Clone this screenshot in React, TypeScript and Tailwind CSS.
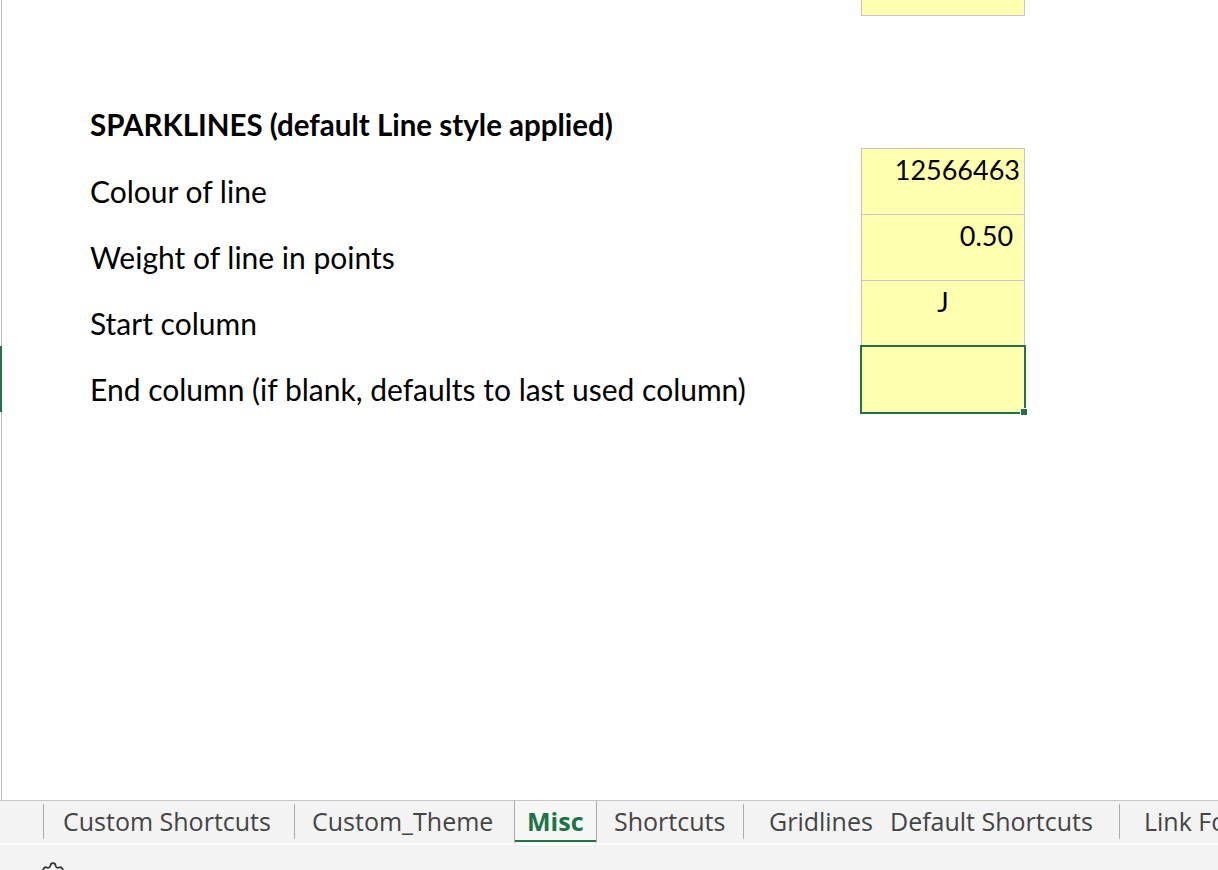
import { Settings } from 'lucide-react';

type SheetRow = {
  label?: string;
  bold?: boolean;
  value?: string;
  align?: 'right' | 'center';
  cell: boolean;
  selected?: boolean;
};

const rows: SheetRow[] = [
  { cell: false },
  { label: 'SPARKLINES (default Line style applied)', bold: true, cell: false },
  { label: 'Colour of line', value: '12566463', align: 'right', cell: true },
  { label: 'Weight of line in points', value: '0.50 ', align: 'right', cell: true },
  { label: 'Start column', value: 'J', align: 'center', cell: true },
  { label: 'End column (if blank, defaults to last used column)', cell: true, selected: true },
];

const tabs = [
  { name: 'Custom Shortcuts', w: 'w-[251px]', pl: 'pl-[20px]', sep: true },
  { name: 'Custom_Theme', w: 'w-[220px]', pl: 'pl-[18px]', sep: true },
  { name: 'Misc', w: 'w-[83px]', pl: 'pl-[12px]', active: true, sep: false },
  { name: 'Shortcuts', w: 'w-[146px]', pl: 'pl-[17px]', sep: false },
  { name: 'Gridlines', w: 'w-[140px]', pl: 'pl-[26px]', sep: true },
  { name: 'Default Shortcuts', w: 'w-[236px]', pl: 'pl-[7px]', sep: false },
  { name: 'Link Formats', w: 'w-[200px]', pl: 'pl-[25px]', sep: true },
];

function LeftEdge({ selected }: { selected?: boolean }) {
  return selected ? (
    <div className="w-[2px] shrink-0 bg-[#217346]" />
  ) : (
    <div className="w-[2px] shrink-0 flex">
      <div className="w-px bg-white" />
      <div className="w-px bg-[#bfbfbf]" />
    </div>
  );
}

function Row({ row }: { row: SheetRow }) {
  return (
    <div className="flex h-[66px]">
      <LeftEdge selected={row.selected} />
      <div className="w-[859px] shrink-0 flex items-end pl-[88px] pb-[6px]">
        <span
          className={`whitespace-nowrap leading-[34px] text-black ${
            row.bold ? 'font-bold text-[29.5px]' : 'text-[30px]'
          }`}
        >
          {row.label}
        </span>
      </div>
      {row.cell && (
        <div
          className={`relative w-[164px] shrink-0 bg-[#ffffb0] border-l border-r border-t border-[#c6c6c6] flex pt-[4px] px-[4px] ${
            row.align === 'center' ? 'justify-center' : 'justify-end'
          }`}
        >
          <span className="whitespace-pre text-[27px] leading-[34px] text-black">{row.value}</span>
          {row.selected && (
            <div className="absolute -left-[2px] -top-[2px] -right-[2px] -bottom-[2px] border-2 border-[#217346]">
              <div className="absolute -right-[4px] -bottom-[4px] w-[8px] h-[8px] bg-[#217346] border border-white" />
            </div>
          )}
        </div>
      )}
    </div>
  );
}

export default function App() {
  return (
    <div
      className="w-[1218px] h-[870px] overflow-hidden bg-white flex flex-col"
      style={{ fontFamily: 'Lato, "Noto Sans", sans-serif' }}
    >
      <div className="flex-1 flex flex-col">
        <div className="flex h-[16px]">
          <LeftEdge />
          <div className="w-[859px] shrink-0" />
          <div className="w-[164px] shrink-0 bg-[#ffffb0] border-l border-r border-b border-[#c6c6c6]" />
        </div>
        {rows.map((row, i) => (
          <Row key={i} row={row} />
        ))}
        <div className="flex flex-1">
          <LeftEdge />
        </div>
      </div>

      <div
        className="h-[43px] shrink-0 bg-[#f3f3f3] border-t border-[#c6c6c6] flex items-stretch overflow-hidden"
        style={{ fontFamily: '"Open Sans", "Noto Sans", sans-serif' }}
      >
        <div className="w-[43px] shrink-0" />
        {tabs.map((t) => (
          <div
            key={t.name}
            className={`${t.w} shrink-0 relative flex items-center ${t.pl} whitespace-nowrap ${
              t.active
                ? '-mt-px bg-[#f6f6f6] border-l border-r border-t border-[#ababab] text-[#217346] font-bold'
                : 'text-[#444444]'
            } text-[25px]`}
          >
            {t.sep && !t.active && (
              <div className="absolute left-0 top-[3px] bottom-[4px] w-px bg-[#ababab]" />
            )}
            <span className="leading-[30px] -mt-[2px]">{t.name}</span>
            {t.active && <div className="absolute left-0 right-0 bottom-[1px] h-[2px] bg-[#217346]" />}
          </div>
        ))}
      </div>
      <div className="h-[2px] shrink-0 bg-white" />
      <div className="h-[25px] shrink-0 bg-[#f3f3f3] flex pl-[40px] pt-[16px] overflow-hidden">
        <Settings size={26} strokeWidth={1.6} className="text-[#333333] shrink-0" />
      </div>
    </div>
  );
}
